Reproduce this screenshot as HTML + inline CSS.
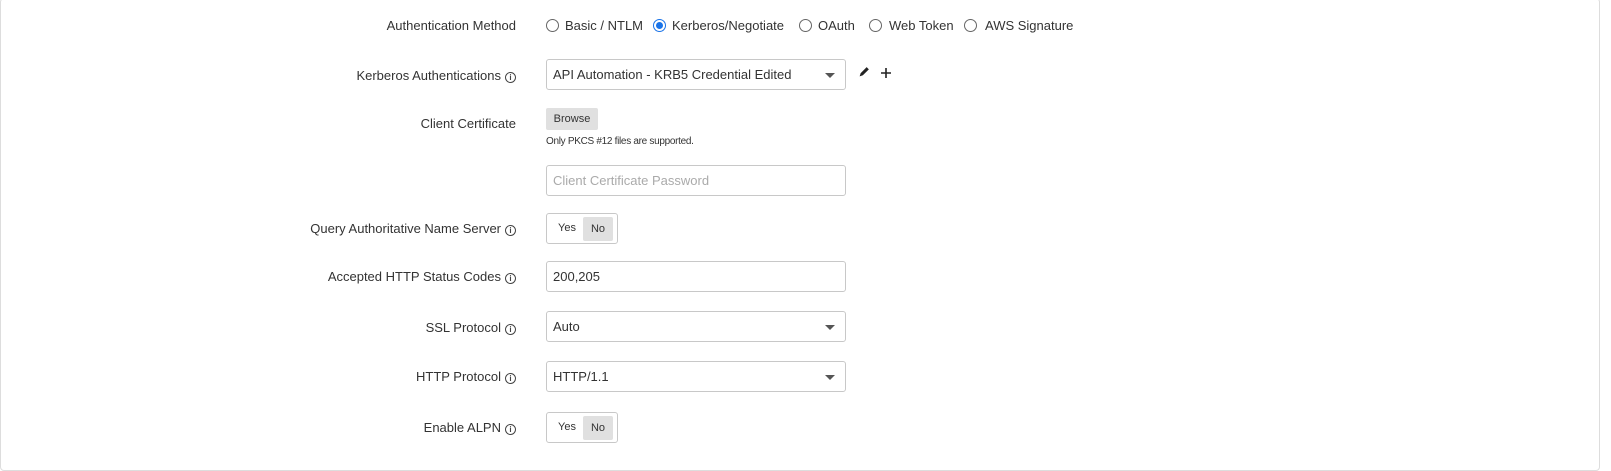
<!DOCTYPE html>
<html><head><meta charset="utf-8"><style>
*{box-sizing:border-box;margin:0;padding:0}
body{width:1611px;height:471px;background:#fff;font-family:"Liberation Sans",sans-serif;color:#333;font-size:13px;position:relative;overflow:hidden}
.frame{position:absolute;left:0;top:-2px;width:1600px;height:473px;border:1px solid #ddd;border-radius:4px}
.lbl{position:absolute;right:1095px;font-size:13px;color:#333;white-space:nowrap;line-height:16px}
.i{display:inline-block;width:11px;height:11px;border:1px solid #444;border-radius:50%;font-size:8px;line-height:9px;text-align:center;font-weight:bold;vertical-align:-1px;margin-left:4px;color:#444;position:relative;top:-1px}
.box{position:absolute;left:546px;width:300px;height:31px;border:1px solid #c8c8c8;border-radius:3px;padding-left:6px;line-height:29px;font-size:13px}
.car{position:absolute;right:10px;top:13px;width:0;height:0;border-left:5px solid transparent;border-right:5px solid transparent;border-top:5px solid #555}
.r{position:absolute;top:19px;width:13px;height:13px;border:1px solid #666;border-radius:50%}
.r.on{border-color:#1a73e8}
.r.on:after{content:"";position:absolute;left:2px;top:2px;width:7px;height:7px;border-radius:50%;background:#1a73e8}
.rt{position:absolute;top:18px;font-size:13px;line-height:16px}
.tg{position:absolute;left:546px;width:72px;height:31px;border:1px solid #c8c8c8;border-radius:3px;font-size:11px}
.tg .y{position:absolute;left:11px;top:8px}
.tg .n{position:absolute;left:36px;top:3px;width:30px;height:24px;background:#e0e0e0;border-radius:2px;text-align:center;line-height:24px}
</style></head><body>
<div class="frame"></div>

<div class="lbl" style="top:18px">Authentication Method</div>
<div class="r" style="left:546px"></div><div class="rt" style="left:565px">Basic / NTLM</div>
<div class="r on" style="left:653px"></div><div class="rt" style="left:672px">Kerberos/Negotiate</div>
<div class="r" style="left:799px"></div><div class="rt" style="left:818px">OAuth</div>
<div class="r" style="left:869px"></div><div class="rt" style="left:889px">Web Token</div>
<div class="r" style="left:964px"></div><div class="rt" style="left:985px">AWS Signature</div>

<div class="lbl" style="top:68px">Kerberos Authentications<span class="i">i</span></div>
<div class="box" style="top:59px">API Automation - KRB5 Credential Edited<span class="car"></span></div>
<svg style="position:absolute;left:858px;top:65px" width="13" height="13" viewBox="0 0 12 12"><path d="M1.5 10.5 L2.5 7.5 L8 2 L10 4 L4.5 9.5 Z" fill="#222"/></svg>
<svg style="position:absolute;left:880px;top:67px" width="12" height="12" viewBox="0 0 12 12"><path d="M6 1V11M1 6H11" stroke="#222" stroke-width="1.6"/></svg>

<div class="lbl" style="top:116px">Client Certificate</div>
<div style="position:absolute;left:546px;top:108px;width:52px;height:22px;background:#e0e0e0;border-radius:2px;font-size:11px;text-align:center;line-height:22px">Browse</div>
<div style="position:absolute;left:546px;top:136px;font-size:10px;color:#333;letter-spacing:-0.3px">Only PKCS #12 files are supported.</div>
<div class="box" style="top:165px;color:#aaa">Client Certificate Password</div>

<div class="lbl" style="top:221px">Query Authoritative Name Server<span class="i">i</span></div>
<div class="tg" style="top:213px"><span class="y">Yes</span><span class="n">No</span></div>

<div class="lbl" style="top:269px">Accepted HTTP Status Codes<span class="i">i</span></div>
<div class="box" style="top:261px">200,205</div>

<div class="lbl" style="top:320px">SSL Protocol<span class="i">i</span></div>
<div class="box" style="top:311px">Auto<span class="car"></span></div>

<div class="lbl" style="top:369px">HTTP Protocol<span class="i">i</span></div>
<div class="box" style="top:361px">HTTP/1.1<span class="car"></span></div>

<div class="lbl" style="top:420px">Enable ALPN<span class="i">i</span></div>
<div class="tg" style="top:412px"><span class="y">Yes</span><span class="n">No</span></div>
</body></html>
